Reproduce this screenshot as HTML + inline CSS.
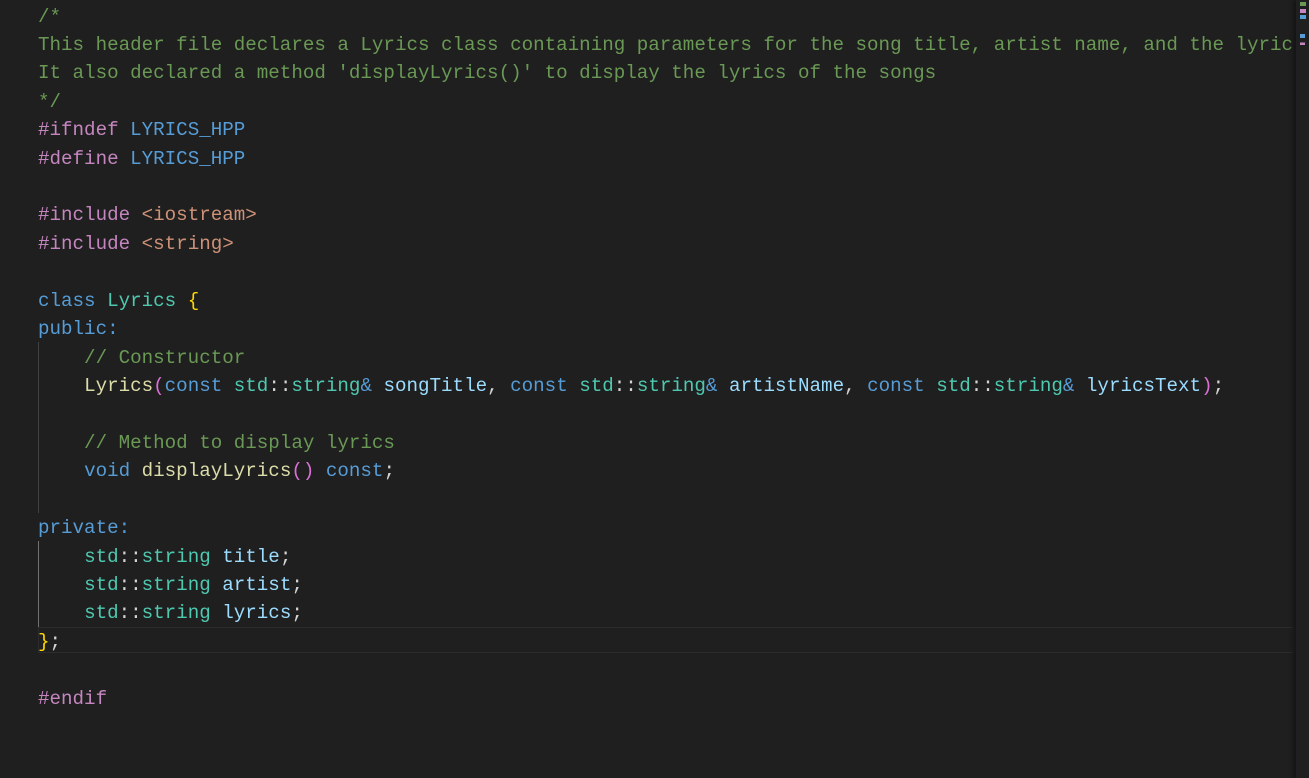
<!DOCTYPE html>
<html><head><meta charset="utf-8"><style>
body{margin:0;width:1309px;height:778px;background:#1f1f1f;overflow:hidden;position:relative;font-family:"Liberation Mono",monospace;font-size:19.2px;color:#d4d4d4}
.l{position:absolute;left:38px;height:28.42px;line-height:28.42px;white-space:pre;margin-top:1.5px}
.c{color:#6a9955}.k{color:#569cd6}.p{color:#c586c0}.s{color:#ce9178}.t{color:#4ec9b0}.f{color:#dcdcaa}.v{color:#9cdcfe}.g{color:#ffd700}.pk{color:#da70d6}.m{color:#569cd6}
.guide{position:absolute;left:38px;width:1px;background:#404040}
</style></head><body>
<div style="position:absolute;left:38px;top:627px;width:1257px;height:26px;border:1px solid #2c2c2c;box-sizing:border-box"></div>
<div class="guide" style="top:342px;height:171px"></div>
<div class="guide" style="top:541px;height:86px;background:#707070"></div>
<div class="l c" style="top:1px">/*</div>
<div class="l c" style="top:29.4px">This header file declares a Lyrics class containing parameters for the song title, artist name, and the lyric</div>
<div class="l c" style="top:57.8px">It also declared a method 'displayLyrics()' to display the lyrics of the songs</div>
<div class="l c" style="top:86.3px">*/</div>
<div class="l" style="top:114.7px"><span class="p">#ifndef</span> <span class="m">LYRICS_HPP</span></div>
<div class="l" style="top:143.1px"><span class="p">#define</span> <span class="m">LYRICS_HPP</span></div>
<div class="l" style="top:199.9px"><span class="p">#include</span> <span class="s">&lt;iostream&gt;</span></div>
<div class="l" style="top:228.4px"><span class="p">#include</span> <span class="s">&lt;string&gt;</span></div>
<div class="l" style="top:285.2px"><span class="k">class</span> <span class="t">Lyrics</span> <span class="g">{</span></div>
<div class="l" style="top:313.6px"><span class="k">public:</span></div>
<div class="l c" style="top:342.1px">    // Constructor</div>
<div class="l" style="top:370.5px">    <span class="f">Lyrics</span><span class="pk">(</span><span class="k">const</span> <span class="t">std</span>::<span class="t">string</span><span class="k">&amp;</span> <span class="v">songTitle</span>, <span class="k">const</span> <span class="t">std</span>::<span class="t">string</span><span class="k">&amp;</span> <span class="v">artistName</span>, <span class="k">const</span> <span class="t">std</span>::<span class="t">string</span><span class="k">&amp;</span> <span class="v">lyricsText</span><span class="pk">)</span>;</div>
<div class="l c" style="top:427.3px">    // Method to display lyrics</div>
<div class="l" style="top:455.8px">    <span class="k">void</span> <span class="f">displayLyrics</span><span class="pk">()</span> <span class="k">const</span>;</div>
<div class="l" style="top:512.6px"><span class="k">private:</span></div>
<div class="l" style="top:541px">    <span class="t">std</span>::<span class="t">string</span> <span class="v">title</span>;</div>
<div class="l" style="top:569.5px">    <span class="t">std</span>::<span class="t">string</span> <span class="v">artist</span>;</div>
<div class="l" style="top:597.9px">    <span class="t">std</span>::<span class="t">string</span> <span class="v">lyrics</span>;</div>
<div class="l" style="top:626.3px"><span class="g">}</span>;</div>
<div class="l p" style="top:683.2px">#endif</div>
<div style="position:absolute;left:1296px;top:0;width:13px;height:778px;background:#1f1f1f;box-shadow:-3px 0 4px #141414"></div>
<div style="position:absolute;left:1300px;top:2px;width:6px;height:20px;background:linear-gradient(#6a9955 0 20%,transparent 20% 35%,#c586c0 35% 55%,transparent 55% 65%,#569cd6 65% 85%,transparent 85%)"></div>
<div style="position:absolute;left:1300px;top:34px;width:5px;height:14px;background:linear-gradient(#569cd6 0 30%,transparent 30% 60%,#c586c0 60% 80%,transparent 80%)"></div>
</body></html>
